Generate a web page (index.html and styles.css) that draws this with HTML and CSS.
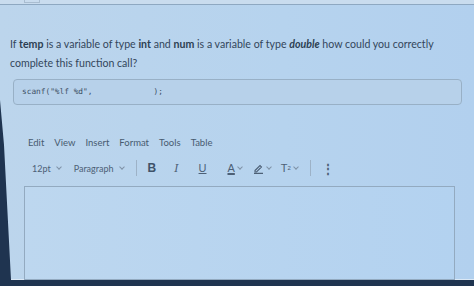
FILE: index.html
```html
<!DOCTYPE html>
<html lang="en">
<head>
  <meta charset="UTF-8">
  <title>Quiz question</title>
  <link rel="stylesheet" href="styles.css">
</head>
<body>

  <div class="screen">
    <div class="topbar"><span class="tab"></span></div>

    <div class="panel">
      <p class="question">
        If <b>temp</b> is a variable of type <b>int</b> and <b>num</b> is a variable of type <b><i>double</i></b> how could you correctly complete this function call?
      </p>

      <div class="code">scanf("%lf %d",             );</div>

      <div class="editor">
        <div class="menubar">
          <span>Edit</span>
          <span>View</span>
          <span>Insert</span>
          <span>Format</span>
          <span>Tools</span>
          <span>Table</span>
        </div>

        <div class="toolbar">
          <span class="drop">12pt <i class="chev"></i></span>
          <span class="drop para">Paragraph <i class="chev"></i></span>
          <span class="sep"></span>
          <span class="btn bold">B</span>
          <span class="btn ital">I</span>
          <span class="btn under">U</span>
          <span class="btn color">A<i class="chev"></i></span>
          <span class="btn pen">
            <svg width="11" height="11" viewBox="0 0 11 11"><path d="M2 7.5 L7 2.5 L8.5 4 L3.5 9 L2 9 Z" fill="none" stroke="#4d6076" stroke-width="1.1"/><path d="M1 10.4 H10" stroke="#4d6076" stroke-width="1.2"/></svg>
            <i class="chev"></i>
          </span>
          <span class="btn sup">T<sup>2</sup><i class="chev"></i></span>
          <span class="sep"></span>
          <span class="btn more">&#8942;</span>
        </div>

        <div class="area"></div>
      </div>
    </div>
  </div>

</body>
</html>
```

FILE: styles.css
```css
body {
  margin: 0;
  padding: 0;
  background-color: #1f3450;
  font-family: 'Lato', 'Noto Sans', sans-serif;
  color: #33465b;
}
.screen {
  width: 474px;
  height: 286px;
  overflow: hidden;
  background: #1f3450;
}
.topbar {
  height: 4px;
  background: #c9dcee;
  border-bottom: 1px solid #8ea8c1;
  padding-left: 24px;
}
.tab {
  display: block;
  width: 14px;
  height: 2px;
  border: 1px solid #a9bdd0;
  border-top: none;
}
.panel {
  height: 275px;
  background: linear-gradient(to right, #bcd5ec, #b6d3ee 60%, #b2d0ee);
  border-bottom: 1px solid #dbe8f5;
  clip-path: polygon(0 0, 100% 0, 100% 100%, 11px 100%, 4px 140px, 0 95px);
  padding: 30px 0 0 10px;
  box-sizing: border-box;
}
.question {
  margin: 0;
  width: 440px;
  font-size: 10.6px;
  line-height: 19px;
}
.question b {
  color: #2c3e52;
}
.code {
  margin: 6px 12px 0 3px;
  height: 24px;
  line-height: 24px;
  padding-left: 8px;
  border: 1px solid #98b0c6;
  border-radius: 4px;
  background: #b7d1ea;
  font-family: 'DejaVu Sans Mono', monospace;
  font-size: 7.8px;
  white-space: pre;
  color: #3d5064;
}
.editor {
  margin: 31px 19px 0 14px;
}
.menubar {
  display: flex;
  gap: 10px;
  padding-left: 4px;
  font-size: 9.5px;
  color: #485b70;
  height: 14px;
  line-height: 14px;
}
.toolbar {
  display: flex;
  align-items: center;
  height: 20px;
  margin-top: 8px;
  padding-left: 8px;
  font-size: 9px;
  color: #4d6076;
}
.drop {
  display: flex;
  align-items: center;
  gap: 3px;
  margin-right: 11px;
}
.drop.para {
  margin-right: 10px;
}
.chev {
  display: inline-block;
  width: 3px;
  height: 3px;
  border-right: 1px solid #7f92a6;
  border-bottom: 1px solid #7f92a6;
  transform: rotate(45deg);
  margin: -3px 2px 0 3px;
}
.sep {
  width: 1px;
  height: 16px;
  background: #9db2c7;
  margin-right: 11px;
}
.btn {
  display: flex;
  align-items: center;
  margin-right: 13px;
  font-size: 12px;
}
.bold {
  font-family: 'Liberation Sans', sans-serif;
  font-weight: bold;
  color: #3f5369;
  margin-right: 15px;
}
.ital {
  font-family: 'DejaVu Serif', serif;
  font-style: italic;
  font-weight: 300;
  font-size: 11px;
  margin-left: 3px;
  margin-right: 20px;
}
.under {
  font-family: 'Liberation Sans', sans-serif;
  font-size: 11px;
  text-decoration: underline;
  margin-right: 21px;
}
.color {
  font-family: 'Liberation Sans', sans-serif;
  font-size: 11px;
  text-decoration: underline;
  text-decoration-thickness: 2px;
  margin-right: 9px;
}
.pen {
  margin-right: 8px;
}
.sup {
  font-family: 'Liberation Sans', sans-serif;
  font-size: 11px;
  margin-right: 10px;
}
.sup sup {
  font-size: 6px;
}
.more {
  font-size: 12px;
  font-weight: bold;
}
.area {
  margin-top: 8px;
  height: 92px;
  border: 1px solid #93aac0;
  background: linear-gradient(to right, #bdd7ef, #b3d2f0);
}
```
